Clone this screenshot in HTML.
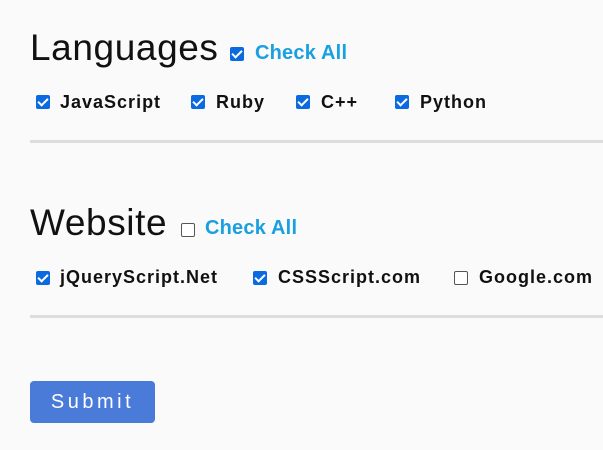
<!DOCTYPE html><html><head><style>
body{margin:0;width:603px;height:450px;background:#fafafa;font-family:"Liberation Sans",sans-serif;position:relative;overflow:hidden}
.a{position:absolute;white-space:nowrap}
.h{font-size:37px;color:#111;letter-spacing:0.6px}
.ca{font-size:20px;font-weight:bold;color:#1aa0e0;letter-spacing:0.2px}
.t{font-size:18px;font-weight:bold;color:#111;letter-spacing:1px}
.cb{position:absolute;width:14px;height:14px;border-radius:2px;box-sizing:border-box}
.on{background:#0b6ae0}
.on::after{content:"";position:absolute;left:4px;top:1px;width:4px;height:8px;border:solid #fff;border-width:0 2px 2px 0;transform:rotate(45deg)}
.off{border:1px solid #555;background:#fff}
.hr{position:absolute;left:30px;width:573px;height:3px;background:#ddd}
</style></head><body>
<div class="a h" style="left:30px;top:27px">Languages</div>
<div class="cb on" style="left:230px;top:47px"></div>
<div class="a ca" style="left:255px;top:42px">Check All</div>
<div class="cb on" style="left:36px;top:95px"></div><div class="a t" style="left:60px;top:92px">JavaScript</div>
<div class="cb on" style="left:191px;top:95px"></div><div class="a t" style="left:216px;top:92px">Ruby</div>
<div class="cb on" style="left:296px;top:95px"></div><div class="a t" style="left:321px;top:92px">C++</div>
<div class="cb on" style="left:395px;top:95px"></div><div class="a t" style="left:420px;top:92px">Python</div>
<div class="hr" style="top:140px"></div>
<div class="a h" style="left:30px;top:202px">Website</div>
<div class="cb off" style="left:181px;top:223px"></div>
<div class="a ca" style="left:205px;top:217px">Check All</div>
<div class="cb on" style="left:36px;top:271px"></div><div class="a t" style="left:60px;top:267px">jQueryScript.Net</div>
<div class="cb on" style="left:253px;top:271px"></div><div class="a t" style="left:278px;top:267px">CSSScript.com</div>
<div class="cb off" style="left:454px;top:271px"></div><div class="a t" style="left:479px;top:267px">Google.com</div>
<div class="hr" style="top:315px"></div>
<div class="a" style="left:30px;top:381px;width:125px;height:42px;background:#4a7bd9;border-radius:4px;color:#fff;font-size:20px;letter-spacing:3.5px;text-align:center;line-height:42px">Submit</div>
</body></html>
